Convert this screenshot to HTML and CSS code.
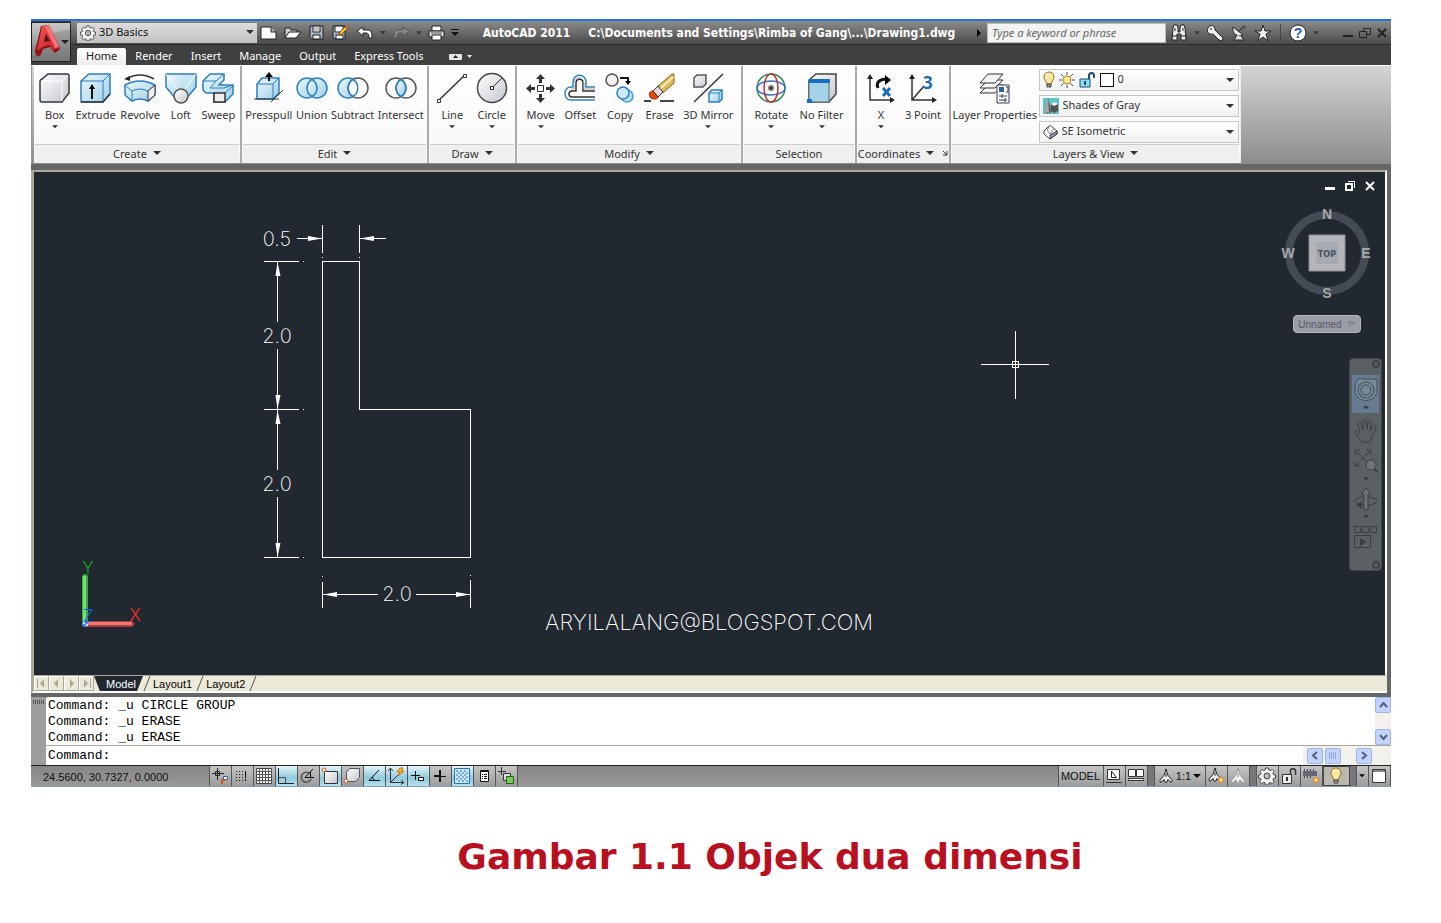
FILE: index.html
```html
<!DOCTYPE html>
<html lang="id">
<head>
    <meta charset="UTF-8">
    <meta name="viewport" content="width=device-width, initial-scale=1.0">
    <title>Gambar 1.1 Objek dua dimensi</title>
    <link rel="stylesheet" href="styles.css">
</head>
<body>
    <!-- shared icon parts -->
    <svg class="defs" width="0" height="0" aria-hidden="true">
        <defs>
            <linearGradient id="blue" x1="0" y1="0" x2="1" y2="1"><stop offset="0" stop-color="#eef8fd"/><stop offset="1" stop-color="#9dd0e8"/></linearGradient>
            <linearGradient id="grey" x1="0" y1="0" x2="1" y2="1"><stop offset="0" stop-color="#ffffff"/><stop offset="1" stop-color="#c3c7cf"/></linearGradient>
            <linearGradient id="red" x1="0" y1="0" x2="1" y2="1"><stop offset="0" stop-color="#f0595a"/><stop offset="1" stop-color="#c3141e"/></linearGradient>
            <symbol id="tri" viewBox="0 0 8 5"><path d="M0 0h8L4 4z"/></symbol>
            <symbol id="bulb" viewBox="0 0 12 18"><path d="M6 1c3 0 5 2 5 5 0 2-2 4-3 7H4C3 10 1 8 1 6c0-3 2-5 5-5z" fill="#ffe9a0" stroke="#8a6f28"/><path d="M4 13h4v3H4z" fill="#999" stroke="#444"/><path d="M3 5c0-2 1-2 2-2" stroke="#fff" fill="none"/></symbol>
            <symbol id="gear" viewBox="0 0 18 18"><path d="M7.500 1h3l.4 2 1.400.6 1.800-1.200 2 2-1.200 1.800.6 1.400 2 .4v3l-2 .4-.6 1.400 1.200 1.800-2 2-1.800-1.200-1.400.6-.4 2h-3l-.4-2-1.400-.6-1.800 1.200-2-2 1.200-1.800-.6-1.400-2-.4v-3l2-.4.6-1.400L1.900 4.400l2-2 1.800 1.200L7.100 3z" fill="#f4f4f4" stroke="#444"/><circle cx="9" cy="9" r="3" fill="#bbb" stroke="#444"/></symbol>
            <symbol id="scale" viewBox="0 0 18 18"><path d="M9 1l2 7 5 6-1 2-4-3-1 3H8l-1-3-4 3-1-2 5-6z" fill="#eee" stroke="currentColor"/><path d="M9 6v4" stroke="currentColor"/></symbol>
        </defs>
    </svg>

    <figure class="page">
        <div class="window">
            <header class="header">
                <button class="app-button" aria-label="Application menu">
                    <svg width="38" height="38" viewBox="0 0 38 38"><path d="M0 24Q18 8 38 7v31H0z" fill="#777" opacity=".4"/><path d="M3 29L9 3l8-1 11 24-5 4-5-6-7 2-3 7z" fill="#7d0f15"/><path d="M5 27L10 3l7-1 11 23-8 3-2-6-7 2-2 6z" fill="url(#red)"/><path d="M12 19l2-8 4 7z" fill="#5b1013"/><path d="M13 3l4-1 10 22-4 1z" fill="#f47274"/><path d="M3 29l8-5-2 7-4 3z" fill="#96141b"/><path d="M29 17h8l-4 4z" fill="#222"/></svg>
                </button>
                <div class="titlebar">
                    <div class="workspace">
                        <svg width="16" height="16"><use href="#gear"/></svg>
                        <select aria-label="Workspace"><option>3D Basics</option></select>
                        <svg class="tri" width="8" height="5"><use href="#tri"/></svg>
                    </div>
                    <div class="quick">
                        <button aria-label="New"><svg width="18" height="16" viewBox="0 0 18 16"><path d="M1 2h10l5 5v7H1z" fill="#fff" stroke="#222"/><path d="M11 2v5h5" fill="#bbb" stroke="#222"/></svg></button>
                        <button aria-label="Open"><svg width="18" height="16" viewBox="0 0 18 16"><path d="M1 13V3h5l1 2h6v3" fill="#ccc" stroke="#222"/><path d="M1 13l4-6h12l-5 6z" fill="#fff" stroke="#222"/></svg></button>
                        <button aria-label="Save"><svg width="16" height="16" viewBox="0 0 16 16"><path d="M1 1h13v13H3l-2-2z" fill="#aab4c2" stroke="#222"/><path d="M4 1h7v6H4z" fill="#fff" stroke="#222"/><path d="M4 10h7v4H4z" fill="#eee" stroke="#222"/><path d="M5 3h5M5 5h5" stroke="#888"/></svg></button>
                        <button aria-label="Save As"><svg width="18" height="16" viewBox="0 0 18 16"><path d="M1 1h12v13H3l-2-2z" fill="#aab4c2" stroke="#222"/><path d="M3 1h8v6H3zM4 10h7v4H4z" fill="#fff" stroke="#222"/><path d="M7 10l1-3 6-6 2 2-6 6z" fill="#ffc832" stroke="#7a4b10"/><path d="M13 2l2-1 1 2-1 1z" fill="#e3542c"/></svg></button>
                        <button aria-label="Undo"><svg width="18" height="14" viewBox="0 0 18 14"><path d="M1 5l6-4v3h5c3 0 4 2 4 8h-3c0-4-1-5-3-5H7v3z" fill="#fff" stroke="#222"/></svg></button>
                        <button class="drop" aria-label="Undo list"><svg width="6" height="4"><use href="#tri"/></svg></button>
                        <button aria-label="Redo"><svg width="18" height="14" viewBox="0 0 18 14"><path d="M17 5l-6-4v3H6c-3 0-4 2-4 8h3c0-4 1-5 3-5h3v3z" fill="#8b8b8b" stroke="#555"/></svg></button>
                        <button class="drop" aria-label="Redo list"><svg width="6" height="4"><use href="#tri"/></svg></button>
                        <button aria-label="Plot"><svg width="18" height="16" viewBox="0 0 18 16"><path d="M4 1h9v5H4z" fill="#fff" stroke="#222"/><path d="M1 6h15v6H1z" fill="#ddd" stroke="#222"/><path d="M4 10h9v5H4z" fill="#fff" stroke="#222"/><path d="M3 8h11" stroke="#555"/></svg></button>
                        <button class="drop" aria-label="Customize"><svg width="8" height="8" viewBox="0 0 8 8"><path d="M0 0h8v1H0zM0 3h8L4 7z" fill="#111"/></svg></button>
                    </div>
                    <div class="title"><span>AutoCAD 2011</span><span>C:\Documents and Settings\Rimba of Gang\...\Drawing1.dwg</span></div>
                    <div class="info">
                        <svg width="5" height="8" viewBox="0 0 5 8"><path d="M0 0l4 4-4 4z"/></svg>
                        <input type="text" placeholder="Type a keyword or phrase" aria-label="Search">
                        <button aria-label="Find"><svg width="18" height="18" viewBox="0 0 18 18"><path d="M3 4l1-3h3l1 3v4h2V4l1-3h3l1 3 1 12h-5v-6H7v6H2z" fill="#eee" stroke="#222"/><path d="M2 12h5M11 12h5M5 4v3M13 4v3" stroke="#222"/></svg></button>
                        <button class="drop" aria-label="Find options"><svg width="6" height="4"><use href="#tri"/></svg></button>
                        <button aria-label="Subscription"><svg width="18" height="18" viewBox="0 0 18 18"><path d="M9 6l8 8-1 3-3-1-6-6C3 11 0 8 2 4s7-3 7 2z" fill="#eee" stroke="#222"/><circle cx="5" cy="5" r="1" fill="#555"/></svg></button>
                        <button aria-label="Communication"><svg width="16" height="18" viewBox="0 0 16 18"><path d="M2 3c-1 7 4 10 10 8z" fill="#eee" stroke="#222"/><path d="M6 11l-3 5h10l-3-4M8 7l4-4" fill="#ddd" stroke="#222"/><circle cx="13" cy="3" r="1" fill="#fff" stroke="#222"/></svg></button>
                        <button aria-label="Favorites"><svg width="18" height="18" viewBox="0 0 18 18"><path d="M9 1l2 6h6l-5 3 2 7-5-4-5 4 2-7-5-3h6z" fill="#eee" stroke="#222"/></svg></button>
                        <span class="split"></span>
                        <button aria-label="Help"><svg width="18" height="18" viewBox="0 0 18 18"><circle cx="9" cy="9" r="8" fill="#fff" stroke="#222"/><text class="q" x="9" y="14">?</text></svg></button>
                        <button class="drop" aria-label="Help options"><svg width="6" height="4"><use href="#tri"/></svg></button>
                    </div>
                    <div class="win">
                        <button aria-label="Minimize"><svg width="12" height="12" viewBox="0 0 12 12"><path d="M1 8h10v2H1z" fill="#222"/></svg></button>
                        <button aria-label="Restore"><svg width="12" height="12" viewBox="0 0 12 12"><path d="M4.500 4V1.500h7v6H8M.5 4.500h7v6h-7z" fill="none" stroke="#222"/></svg></button>
                        <button aria-label="Close"><svg width="12" height="12" viewBox="0 0 12 12"><path d="M2 2l8 8M10 2l-8 8" stroke="#222" stroke-width="2"/></svg></button>
                    </div>
                </div>
                <nav class="tabs">
                    <a class="active" href="#home">Home</a>
                    <a href="#render">Render</a>
                    <a href="#insert">Insert</a>
                    <a href="#manage">Manage</a>
                    <a href="#output">Output</a>
                    <a href="#express">Express Tools</a>
                    <button aria-label="Minimize ribbon"><svg width="24" height="8" viewBox="0 0 24 8"><rect y="1" width="13" height="6" rx="1" fill="#e8e8e8"/><path d="M4 5h5L6.500 2z" fill="#222"/><path d="M18 2h5l-2.500 3z" fill="#eee"/></svg></button>
                </nav>
            </header>

            <div class="ribbon">
                <section class="panel create">
                    <div class="tools">
                        <button class="tool"><svg width="32" height="32" viewBox="0 0 32 32"><path d="M1 9q0-1 2-2l6-5h19q2 0 2 2v17l-7 9H3q-2 0-2-2z" fill="url(#grey)" stroke="#33373f" stroke-width="1.500"/><path d="M2 9h21v20M23 9l6-6" fill="none" stroke="#fff"/></svg>Box<svg class="tri" width="6" height="4"><use href="#tri"/></svg></button>
                        <button class="tool"><svg width="32" height="32" viewBox="0 0 32 32"><path d="M1 9l8-7h21v20l-7 8H1z" fill="url(#blue)" stroke="#2b7fc0" stroke-width="1.500"/><path d="M1 9h22v21M23 9l7-7" fill="none" stroke="#2b7fc0"/><path d="M12 27V15" stroke="#111" stroke-width="2"/><path d="M9 17l3-5 3 5z"/><path d="M1 30h22l7-8" fill="none" stroke="#333" stroke-width="1.500"/></svg>Extrude</button>
                        <button class="tool"><svg width="32" height="32" viewBox="0 0 32 32"><path d="M2 7Q16-1 30 7" fill="none" stroke="#333" stroke-width="1.500"/><path d="M0 7l6-3v5z" fill="#222"/><path d="M1 13Q16 5 31 13v10l-7 6q-8-4-16 0l-7-6z" fill="url(#blue)" stroke="#2b7fc0" stroke-width="1.500"/><path d="M1 13l7 6q8-4 16 0l7-6M8 19v10" fill="none" stroke="#2b7fc0"/><path d="M24 19l7-6v10l-7 6z" fill="#eee" stroke="#333"/></svg>Revolve</button>
                        <button class="tool"><svg width="32" height="32" viewBox="0 0 32 32"><path d="M1 2h30v13L21 27H11L1 15z" fill="url(#blue)" stroke="#2b7fc0" stroke-width="1.500"/><path d="M1 2l12 16M31 2L19 18" stroke="#fff"/><circle cx="16" cy="24" r="7" fill="url(#grey)" stroke="#555" stroke-width="1.500"/></svg>Loft</button>
                        <button class="tool"><svg width="32" height="32" viewBox="0 0 32 32"><path d="M1 9l7-7h14v6l-5 5h14v9l-8 8H12v-9H4l-3-3z" fill="url(#blue)" stroke="#2b7fc0" stroke-width="1.500"/><path d="M1 9h13l8-7M14 9l-6 7h14l9-3M23 21l8-7" fill="none" stroke="#2b7fc0"/><path d="M12 21h11v9H12z" fill="#eee" stroke="#333" stroke-width="1.500"/></svg>Sweep</button>
                    </div>
                    <button class="panel-name">Create<svg class="tri" width="8" height="5"><use href="#tri"/></svg></button>
                </section>
                <section class="panel edit">
                    <div class="tools">
                        <button class="tool"><svg width="32" height="32" viewBox="0 0 32 32"><path d="M4 12l5-6h17v15l-6 6H4z" fill="url(#blue)" stroke="#2b7fc0" stroke-width="1.500"/><path d="M4 12h16v15M20 12l6-6" fill="none" stroke="#2b7fc0"/><path d="M1 27h25M18 30l12-12" stroke="#333"/><path d="M16 9V3" stroke="#111" stroke-width="2"/><path d="M12 5l4-5 4 5z"/></svg>Presspull</button>
                        <button class="tool"><svg width="32" height="32" viewBox="0 0 32 32"><circle cx="11" cy="16" r="10" fill="url(#blue)"/><circle cx="21" cy="16" r="10" fill="url(#blue)"/><g fill="none" stroke="#2b7fc0" stroke-width="1.500"><circle cx="11" cy="16" r="10"/><circle cx="21" cy="16" r="10"/></g></svg>Union</button>
                        <button class="tool"><svg width="32" height="32" viewBox="0 0 32 32"><circle cx="11" cy="16" r="10" fill="url(#blue)" stroke="#2b7fc0" stroke-width="1.500"/><circle cx="21" cy="16" r="10" fill="#fff" stroke="#555" stroke-width="1.500"/><path d="M16 7.500a10 10 0 0 0 0 17a10 10 0 0 0 0-17z" fill="#fff" stroke="#2b7fc0" stroke-width="1.500"/></svg>Subtract</button>
                        <button class="tool"><svg width="32" height="32" viewBox="0 0 32 32"><g fill="none" stroke="#555" stroke-width="1.500"><circle cx="11" cy="16" r="10"/><circle cx="21" cy="16" r="10"/></g><path d="M16 7.500a10 10 0 0 0 0 17a10 10 0 0 0 0-17z" fill="url(#blue)" stroke="#2b7fc0" stroke-width="1.500"/></svg>Intersect</button>
                    </div>
                    <button class="panel-name">Edit<svg class="tri" width="8" height="5"><use href="#tri"/></svg></button>
                </section>
                <section class="panel draw">
                    <div class="tools">
                        <button class="tool"><svg width="32" height="32" viewBox="0 0 32 32"><path d="M3 28L29 3" stroke="#333" stroke-width="1.500"/><path d="M1.500 27.500h3v3h-3zM27.500 2.500h3v3h-3z" fill="#fff" stroke="#333"/></svg>Line<svg class="tri" width="6" height="4"><use href="#tri"/></svg></button>
                        <button class="tool"><svg width="32" height="32" viewBox="0 0 32 32"><circle cx="16" cy="16" r="14.500" fill="url(#grey)" stroke="#444" stroke-width="1.500"/><path d="M16 16L26 6" stroke="#333"/><path d="M14.500 14.500h3v3h-3z" fill="#fff" stroke="#222"/></svg>Circle<svg class="tri" width="6" height="4"><use href="#tri"/></svg></button>
                    </div>
                    <button class="panel-name">Draw<svg class="tri" width="8" height="5"><use href="#tri"/></svg></button>
                </section>
                <section class="panel modify">
                    <div class="tools">
                        <button class="tool"><svg width="32" height="32" viewBox="0 0 32 32"><path d="M12.500 13.500h6v6h-6z" fill="#fff" stroke="#333"/><path d="M15.500 11V5M15.500 22v6M10 16.500H4M21 16.500h6" stroke="#333" stroke-width="3"/><path d="M11 7l4.500-5L20 7zM11 26l4.500 5 4.500-5zM6 12l-5 4.500L6 21zM25 12l5 4.500-5 4.500z" fill="#333"/></svg>Move<svg class="tri" width="6" height="4"><use href="#tri"/></svg></button>
                        <button class="tool"><svg width="32" height="32" viewBox="0 0 32 32"><g fill="none"><path d="M31 15H22V10c0-9-13-9-13 0v5H7c-8 0-8 13 0 13h24" stroke="#2b7fc0" stroke-width="1.500"/><path d="M31 19h-12v-8c0-5-7-5-7 0v8H8c-4 0-4 6 0 6h23" stroke="#333" stroke-width="1.500"/><path d="M31 17H20V11c0-7-10-7-10 0v6H7" stroke="#aaa"/></g></svg>Offset</button>
                        <button class="tool"><svg width="32" height="32" viewBox="0 0 32 32"><circle cx="8" cy="8" r="6" fill="#f2f2f2" stroke="#555" stroke-width="1.500"/><path d="M16 6h8v4" fill="none" stroke="#111" stroke-width="2"/><path d="M21 9h6l-3 4z"/><circle cx="23" cy="24" r="6" fill="url(#blue)" stroke="#4a9ad0" stroke-width="1.500"/><circle cx="19" cy="21" r="6" fill="#cfeafa" stroke="#2b7fc0" stroke-width="1.500"/></svg>Copy</button>
                        <button class="tool"><svg width="32" height="32" viewBox="0 0 32 32"><path d="M0 29h7M16 29h14" stroke="#444" stroke-width="2"/><path d="M14 14L28 2h2v9L19 21z" fill="#dcb85c" stroke="#8a6520"/><path d="M16 17L29 5" stroke="#fff0b8" stroke-width="2"/><path d="M9 19l5-5 5 6-5 5z" fill="#ddd" stroke="#333"/><path d="M9 19c-4 0-5 4-2 7 3 2 7 1 7-1z" fill="#e3490f" stroke="#8b2500"/></svg>Erase</button>
                        <button class="tool"><svg width="32" height="32" viewBox="0 0 32 32"><path d="M2 30L31 2" stroke="#333" stroke-width="1.500"/><path d="M2 6l3-3h9v9l-3 3H2z" fill="url(#grey)" stroke="#555" stroke-width="1.500"/><path d="M17 21l3-3h10v9l-3 3H17z" fill="url(#blue)" stroke="#2b7fc0" stroke-width="1.500"/><path d="M17 21h10v9M27 21l3-3" fill="none" stroke="#2b7fc0"/></svg>3D Mirror<svg class="tri" width="6" height="4"><use href="#tri"/></svg></button>
                    </div>
                    <button class="panel-name">Modify<svg class="tri" width="8" height="5"><use href="#tri"/></svg></button>
                </section>
                <section class="panel selection">
                    <div class="tools">
                        <button class="tool"><svg width="32" height="32" viewBox="0 0 32 32"><g fill="none" stroke-width="1.500"><circle cx="16" cy="16" r="14" stroke="#3b8a4a"/><ellipse cx="16" cy="16" rx="14" ry="7" stroke="#3570c0"/><ellipse cx="16" cy="16" rx="7" ry="14" stroke="#b8343a"/></g><circle cx="16" cy="16" r="3" fill="#777"/><circle cx="16" cy="16" r="1"/></svg>Rotate<svg class="tri" width="6" height="4"><use href="#tri"/></svg></button>
                        <button class="tool"><svg width="32" height="32" viewBox="0 0 32 32"><path d="M3 8l7-6h20v20l-7 8H3z" fill="url(#grey)" stroke="#444" stroke-width="1.500"/><path d="M3 8h20v22H3z" fill="#a5d4ea" stroke="#666"/><path d="M3 7h21v4H3zM1 27h5v4H1z" fill="#1370c4"/></svg>No Filter<svg class="tri" width="6" height="4"><use href="#tri"/></svg></button>
                    </div>
                    <button class="panel-name">Selection</button>
                </section>
                <section class="panel coords">
                    <div class="tools">
                        <button class="tool"><svg width="32" height="32" viewBox="0 0 32 32"><path d="M5 5v23h22" fill="none" stroke="#333" stroke-width="1.500"/><path d="M2 7l3-5 3 5zM25 25l5 3-5 3z" fill="#222"/><path d="M13 16c-3-7 5-10 9-8" fill="none" stroke="#111" stroke-width="3"/><path d="M20 3l6 5-6 5z"/><path d="M18 16l7 8M25 16l-7 8" stroke="#1b6db5" stroke-width="3"/></svg>X<svg class="tri" width="6" height="4"><use href="#tri"/></svg></button>
                        <button class="tool"><svg width="32" height="32" viewBox="0 0 32 32"><path d="M5 5v23h22M5 28l12-14" fill="none" stroke="#333" stroke-width="1.500"/><path d="M2 7l3-5 3 5zM25 25l5 3-5 3z" fill="#222"/><text class="three" x="16" y="17">3</text></svg>3 Point</button>
                    </div>
                    <button class="panel-name">Coordinates<svg class="tri" width="8" height="5"><use href="#tri"/></svg><svg class="corner" width="6" height="6" viewBox="0 0 6 6"><path d="M1 1l4 4M5 1v4H1" fill="none" stroke="#333"/></svg></button>
                </section>
                <section class="panel layers">
                    <div class="tools">
                        <button class="tool"><svg width="32" height="32" viewBox="0 0 32 32"><g fill="#f6f6f6" stroke="#333"><path d="M1 21l8-8h15l-8 8z"/><path d="M1 16l8-8h15l-8 8z"/><path d="M1 11l8-9h15l-8 9z"/></g><path d="M18 13h12v18H18z" fill="#fff" stroke="#333b55"/><path d="M20 15h5v5h-5z" fill="#2a61ac"/><path d="M27 15h2v5h-2M20 24h8M20 28h8M23 22v4M26 26v4" fill="none" stroke="#333b55"/></svg>Layer Properties</button>
                        <div class="combos">
                            <div class="combo">
                                <svg width="12" height="18"><use href="#bulb"/></svg>
                                <svg width="16" height="16" viewBox="0 0 16 16"><path d="M8 0v16M0 8h16M2 2l12 12M14 2L2 14" stroke="#444"/><circle cx="8" cy="8" r="5" fill="#fff"/><circle cx="8" cy="8" r="4" fill="#ffe58c" stroke="#a8882c"/></svg>
                                <svg width="17" height="16" viewBox="0 0 17 16"><path d="M10 8V4c0-4 5-4 5 0v2" fill="none" stroke="#1c4f74" stroke-width="2"/><path d="M1 7h10v8H1z" fill="#8edcf0" stroke="#1c4f74"/><path d="M6 9v4" stroke="#1c4f74" stroke-width="2"/></svg>
                                <span class="swatch"></span>
                                <select aria-label="Layer"><option>0</option></select>
                                <svg class="tri" width="8" height="5"><use href="#tri"/></svg>
                            </div>
                            <div class="combo">
                                <svg width="16" height="16" viewBox="0 0 16 16"><path d="M0 0h16v16H0z" fill="#5cc5c8"/><path d="M5 0l4 14-4 2-4-2z" fill="#666"/><path d="M5 0l1 15-5-1z" fill="#aaa"/><path d="M8 6l4-2 3 2v7l-4 2-3-2z" fill="#555"/><path d="M8 6l4-2 3 2-4 2z" fill="#fff"/></svg>
                                <select aria-label="Visual style"><option>Shades of Gray</option></select>
                                <svg class="tri" width="8" height="5"><use href="#tri"/></svg>
                            </div>
                            <div class="combo">
                                <svg width="15" height="16" viewBox="0 0 15 16"><path d="M1 7l6-6 7 6v3l-7 5-6-5z" fill="#fff" stroke="#444"/><path d="M14 7v3l-7 5v-4z" fill="#8a94a2" stroke="#444"/><path d="M4 6l3-5 4 4-4 5z" fill="#eee" stroke="#888"/></svg>
                                <select aria-label="View"><option>SE Isometric</option></select>
                                <svg class="tri" width="8" height="5"><use href="#tri"/></svg>
                            </div>
                        </div>
                    </div>
                    <button class="panel-name">Layers &amp; View<svg class="tri" width="8" height="5"><use href="#tri"/></svg></button>
                </section>
            </div>

            <main class="document">
                <div class="canvas">
                    <svg class="drawing" width="100%" height="100%">
                        <g class="lines">
                            <!-- object -->
                            <path d="M288.500 89.500h37v148h111v148h-148z"/>
                            <!-- vertical dimensions -->
                            <path d="M230 89.500h35M269 89.500h1M230 237.500h35M269 237.500h1M230 385.500h35M269 385.500h1"/>
                            <path d="M243.500 90v60M243.500 177v121M243.500 325v60"/>
                            <!-- top dimension -->
                            <path d="M288.500 53v28M288.500 85v1M325.500 53v28M325.500 85v1M263 66.500h25M326 66.500h26"/>
                            <!-- bottom dimension -->
                            <path d="M288.500 404v1M288.500 410v26M436.500 403v1M436.500 408v28M289 422.500h55M382 422.500h54"/>
                            <!-- crosshair -->
                            <path d="M947 192.500h68M981.500 159v68M978.500 189.500h6v6h-6z"/>
                        </g>
                        <g fill="#fff">
                            <path d="M243.500 90l3 14h-5zM243.500 237l3-14h-5zM243.500 238l3 14h-5zM243.500 385l3-14h-5z"/>
                            <path d="M288 66.500l-14-2.500v5zM326 66.500l14-2.500v5zM289 422.500l14-2.500v5zM436 422.500l-14-2.500v5z"/>
                        </g>
                        <g class="dims">
                            <text x="243" y="74">0.5</text>
                            <text x="243" y="171">2.0</text>
                            <text x="243" y="319">2.0</text>
                            <text x="363" y="429">2.0</text>
                        </g>
                        <text class="note" x="675" y="458">ARYILALANG@BLOGSPOT.COM</text>
                        <!-- ucs icon -->
                        <path d="M48 404l2-2h2l2 2v46h-6z" fill="#3ea53e"/>
                        <path d="M49 404h3v46h-3z" fill="#72e272"/>
                        <path d="M52 449h46l3 3-3 3H52z" fill="#a33c3e"/>
                        <path d="M52 450h46v3H52z" fill="#f67676"/>
                        <circle cx="51" cy="452" r="3" fill="#4c8be8"/>
                        <path d="M49 450h2v2h-2zM52 452h2v2h-2z" fill="#c4e2ff"/>
                        <g class="axes">
                            <text x="54" y="402" fill="#17a51b">Y</text>
                            <text x="101" y="449" fill="#ff2a2a">X</text>
                            <text x="54" y="450" fill="#1b62f0">Z</text>
                        </g>
                    </svg>

                    <div class="doc-win">
                        <button aria-label="Minimize drawing"><svg width="12" height="12" viewBox="0 0 12 12"><path d="M1 7h10v3H1z" fill="#fff"/></svg></button>
                        <button aria-label="Restore drawing"><svg width="12" height="12" viewBox="0 0 12 12"><path d="M4 1.500h6.500V8" fill="none" stroke="#fff"/><path d="M2 4h6v6H2z" fill="none" stroke="#fff" stroke-width="2"/></svg></button>
                        <button aria-label="Close drawing"><svg width="12" height="12" viewBox="0 0 12 12"><path d="M2 2l8 8M10 2l-8 8" stroke="#fff" stroke-width="2"/></svg></button>
                    </div>

                    <div class="viewcube">
                        <svg width="100" height="100" viewBox="0 0 100 100">
                            <circle cx="50" cy="50" r="38" fill="none" stroke="#444b54" stroke-width="8"/>
                            <path d="M32 32h36v36H32z" fill="#b3b5b8" stroke="#8b8f94"/>
                            <path d="M39 39h22v22H39z" fill="#a5a9b1"/>
                            <text class="top" x="50" y="54">TOP</text>
                            <g class="compass">
                                <text x="50" y="16">N</text>
                                <text x="50" y="95">S</text>
                                <text x="11" y="55">W</text>
                                <text x="89" y="55">E</text>
                            </g>
                        </svg>
                        <button class="ucs-name">Unnamed<svg width="9" height="6" viewBox="0 0 9 6"><path d="M1 1h7L4.500 4.500z" fill="none" stroke="#70757c"/></svg></button>
                    </div>

                    <div class="navbar">
                        <button aria-label="Close bar" class="dot"><svg width="8" height="8" viewBox="0 0 8 8"><circle cx="4" cy="4" r="4" fill="#3d4247"/><path d="M2 2l4 4M6 2L2 6" stroke="#6b7075"/></svg></button>
                        <button aria-label="Steering wheel" class="wheel"><svg width="24" height="24" viewBox="0 0 24 24"><g fill="#778899" stroke="#3f4d5a"><path d="M12 1h11v11c0 14-22 14-22 0S6 1 12 1z"/><circle cx="12" cy="12" r="8"/><path d="M6 18l3-3M18 18l-3-3"/><circle cx="12" cy="12" r="5"/></g></svg><svg width="6" height="4"><use href="#tri"/></svg></button>
                        <button aria-label="Pan"><svg width="24" height="24" viewBox="0 0 24 24"><path d="M8 23L1 14c0-3 2-2 5 1L4 5c1-2 3-2 3 0l2 6V2c1-2 3-2 3 0l1 8 1-7c1-2 3-1 3 1l-1 8 3-5c2-2 3 0 3 2l-4 9-2 5z" fill="none" stroke="#3a3f45"/></svg></button>
                        <button aria-label="Zoom"><svg width="24" height="24" viewBox="0 0 24 24"><path d="M2 2l14 14M16 2L2 16M1 6V1h5M12 1h5v5M1 12v5h5" fill="none" stroke="#3a3f45"/><circle cx="17" cy="16" r="5" fill="#6f7478" stroke="#3a3f45"/><path d="M20 20l4 3" stroke="#3a3f45" stroke-width="2"/></svg><svg width="6" height="4"><use href="#tri"/></svg></button>
                        <button aria-label="Orbit"><svg width="24" height="24" viewBox="0 0 24 24"><ellipse cx="12" cy="14" rx="11" ry="4" fill="none" stroke="#3a3f45"/><path d="M10 23V7H7l5-6 5 6h-3v16z" fill="#6f7478" stroke="#3a3f45"/><path d="M8 14v8l-6-4z" fill="#3a3f45"/></svg><svg width="6" height="4"><use href="#tri"/></svg></button>
                        <button aria-label="ShowMotion"><svg width="24" height="24" viewBox="0 0 24 24"><path d="M.5 1.500h6v6h-6zM8.500 1.500h6v6h-6zM16.500 1.500h6v6h-6zM.5 10.500h16v12H.5z" fill="none" stroke="#3a3f45"/><path d="M6 13l7 4-7 4z" fill="#3a3f45"/></svg></button>
                        <button aria-label="Bar options" class="dot end"><svg width="8" height="8" viewBox="0 0 8 8"><circle cx="4" cy="4" r="4" fill="#3d4247"/><path d="M2 3h4M2 5h4" stroke="#6b7075"/></svg></button>
                    </div>
                </div>

                <div class="sheets">
                    <div class="sheet-nav">
                        <button aria-label="First"><svg width="9" height="9" viewBox="0 0 9 9"><path d="M0 0h1v9H0zM7 0v9L3 4.500z"/></svg></button>
                        <button aria-label="Previous"><svg width="9" height="9" viewBox="0 0 9 9"><path d="M6 0v9L2 4.500z"/></svg></button>
                        <button aria-label="Next"><svg width="9" height="9" viewBox="0 0 9 9"><path d="M3 0v9l4-4.500z"/></svg></button>
                        <button aria-label="Last"><svg width="9" height="9" viewBox="0 0 9 9"><path d="M2 0v9l4-4.500zM8 0h1v9H8z"/></svg></button>
                    </div>
                    <a class="active" href="#model">Model</a>
                    <svg width="8" height="15" viewBox="0 0 8 15"><path d="M1 15L7 0" stroke="#555"/></svg>
                    <a href="#layout1">Layout1</a>
                    <svg width="8" height="15" viewBox="0 0 8 15"><path d="M1 15L7 0" stroke="#555"/></svg>
                    <a href="#layout2">Layout2</a>
                    <svg width="8" height="15" viewBox="0 0 8 15"><path d="M1 15L7 0" stroke="#555"/></svg>
                </div>
            </main>

            <div class="command">
                <div class="grip"></div>
                <div class="console">
                    <div class="history">
                        <pre>Command: _u CIRCLE GROUP
Command: _u ERASE
Command: _u ERASE</pre>
                        <div class="vscroll">
                            <button class="sb" aria-label="Scroll up"><svg width="9" height="6" viewBox="0 0 9 6"><path d="M1 5l3.500-4L8 5" fill="none" stroke="#4d6185" stroke-width="2"/></svg></button>
                            <button class="sb" aria-label="Scroll down"><svg width="9" height="6" viewBox="0 0 9 6"><path d="M1 1l3.500 4L8 1" fill="none" stroke="#4d6185" stroke-width="2"/></svg></button>
                        </div>
                    </div>
                    <div class="prompt">
                        <label for="cmd">Command:</label>
                        <input type="text" id="cmd">
                        <div class="hscroll">
                            <button class="sb" aria-label="Scroll left"><svg width="6" height="9" viewBox="0 0 6 9"><path d="M5 1L1 4.500 5 8" fill="none" stroke="#4d6185" stroke-width="2"/></svg></button>
                            <button class="sb thumb" aria-label="Scroll position"><svg width="8" height="7" viewBox="0 0 8 7"><path d="M.5 0v7M2.500 0v7M4.500 0v7M6.500 0v7" stroke="#90aee8"/></svg></button>
                            <button class="sb last" aria-label="Scroll right"><svg width="6" height="9" viewBox="0 0 6 9"><path d="M1 1l4 3.500L1 8" fill="none" stroke="#4d6185" stroke-width="2"/></svg></button>
                        </div>
                    </div>
                </div>
            </div>

            <footer class="status">
                <div class="position">24.5600, 30.7327, 0.0000</div>
                <div class="group">
                    <button aria-label="Infer"><svg width="18" height="18" viewBox="0 0 18 18"><path d="M6.500 1v12M1 6.500h12" stroke="#222"/><path d="M4.500 4.500h4v4h-4z" fill="none" stroke="#222"/><path d="M12.500 9.500h4v3h-4z" fill="#fff" stroke="#1b62c0"/><path d="M11 12v5M11 13h3" stroke="#e0501c" stroke-width="2"/></svg></button>
                    <button aria-label="Snap"><svg width="18" height="18" viewBox="0 0 18 18"><path d="M3 4.500h8M3 7.500h8M3 10.500h8M3 13.500h10" stroke="#222" stroke-dasharray="1 2"/><path d="M12.500 4v7M12.500 12v2" stroke="#111"/></svg></button>
                    <button aria-label="Grid"><svg width="18" height="18" viewBox="0 0 18 18"><path d="M1.500 1.500h15v15h-15z" fill="#fff" stroke="#444"/><path d="M4.500 1v16M7.500 1v16M10.500 1v16M13.500 1v16M1 4.500h16M1 7.500h16M1 10.500h16M1 13.500h16" stroke="#555"/></svg></button>
                    <button class="on" aria-label="Ortho"><svg width="18" height="18" viewBox="0 0 18 18"><path d="M1.500 1v15.500H17" fill="none" stroke="#222"/><path d="M2 10.500h6.500V16" fill="none" stroke="#555"/></svg></button>
                    <button aria-label="Polar"><svg width="18" height="18" viewBox="0 0 18 18"><path d="M10 6a5 5 0 1 0 2 6" fill="none" stroke="#555" stroke-width="1.500"/><path d="M14 2L6 10.500h9M11.500 5v5" fill="none" stroke="#111"/></svg></button>
                    <button class="on" aria-label="Object snap"><svg width="18" height="18" viewBox="0 0 18 18"><path d="M3.500 4.500h13v12h-13z" fill="url(#grey)" stroke="#333"/><circle cx="3" cy="3" r="2" fill="#fff" stroke="#e0501c"/></svg></button>
                    <button aria-label="3D object snap"><svg width="18" height="18" viewBox="0 0 18 18"><path d="M3.500 5.500l3-4h10v9l-4 4h-9z" fill="url(#grey)" stroke="#555"/><circle cx="3" cy="14" r="2" fill="#fff" stroke="#e0501c"/></svg></button>
                    <button class="on" aria-label="Tracking"><svg width="18" height="18" viewBox="0 0 18 18"><path d="M14 3L4 13.500h11M7 10l2 3" fill="none" stroke="#111"/></svg></button>
                    <button class="on" aria-label="Dynamic UCS"><svg width="18" height="18" viewBox="0 0 18 18"><path d="M3.500 2v13.500H17M4 15L11 8" fill="none" stroke="#333"/><path d="M1 4l2.500-3L6 4M14 13l3 2.500-3 2" fill="none" stroke="#333"/><path d="M13 1l-3 4h3l-2 4 6-5h-3l2-3z" fill="#ffc21d" stroke="#cc6b12"/></svg></button>
                    <button class="on" aria-label="Dynamic input"><svg width="18" height="18" viewBox="0 0 18 18"><path d="M6.500 4v9M2 8.500h9" stroke="#111"/><path d="M9.500 10.500h5v3h-5z" fill="#fff" stroke="#111"/></svg></button>
                    <button aria-label="Lineweight"><svg width="18" height="18" viewBox="0 0 18 18"><path d="M9 3v12M3 9h6" stroke="#111" stroke-width="2"/><path d="M9 9.500h6" stroke="#111"/></svg></button>
                    <button class="on" aria-label="Transparency"><svg width="18" height="18" viewBox="0 0 18 18"><path d="M1.500 1.500h15v15h-15z" fill="#cfe8f8" stroke="#2672bd"/><path d="M3 4h12M3 8h12M3 12h12" stroke="#7ab0d8" stroke-width="2" stroke-dasharray="2 2"/><path d="M5 6h11M5 10h11M5 14h10" stroke="#7ab0d8" stroke-width="2" stroke-dasharray="2 2"/></svg></button>
                    <button aria-label="Quick properties"><svg width="18" height="18" viewBox="0 0 18 18"><path d="M5.500 3.500h8v11h-8z" fill="#fff" stroke="#111"/><path d="M5 4.500h9M7 7.500h1M9 7.500h3M7 9.500h1M9 9.500h3M7 11.500h1M9 11.500h3" stroke="#111"/></svg></button>
                    <button aria-label="Selection cycling"><svg width="18" height="18" viewBox="0 0 18 18"><path d="M4.500 0v8M1 4.500h8" stroke="#333"/><path d="M6.500 6.500h7v7h-7z" fill="#ddd" stroke="#333"/><path d="M9.500 9.500h7v7h-7z" fill="#7cc95c" stroke="#24621b"/></svg></button>
                </div>
                <div class="group right">
                    <button class="model">MODEL</button>
                    <button aria-label="Layout view"><svg width="18" height="18" viewBox="0 0 18 18"><path d="M2.500 2.500h12v10h-12z" fill="#fff" stroke="#333"/><path d="M6.500 4v6.500h5z" fill="none" stroke="#222"/><path d="M1 15.500h16" stroke="#333"/></svg></button>
                    <button aria-label="Drawings view"><svg width="18" height="18" viewBox="0 0 18 18"><path d="M1.500 2.500h7v7h-7zM9.500 2.500h7v7h-7zM1.500 11.500h15v2h-15z" fill="#fff" stroke="#333"/></svg></button>
                    <span class="space"></span>
                    <button class="ratio"><svg width="16" height="16"><use href="#scale"/></svg>1:1<svg width="8" height="5"><use href="#tri"/></svg></button>
                    <button aria-label="Annotation visibility"><svg width="18" height="18" viewBox="0 0 18 18"><use href="#scale" width="16" height="16"/><circle cx="14" cy="13" r="2.500" fill="#ffe277" stroke="#e57a17"/></svg></button>
                    <button class="off" aria-label="Auto scale"><svg width="18" height="18"><use href="#scale"/></svg></button>
                    <span class="space"></span>
                    <button aria-label="Workspace switching"><svg width="18" height="18"><use href="#gear"/></svg></button>
                    <button aria-label="Lock toolbars"><svg width="18" height="18" viewBox="0 0 18 18"><path d="M10.500 7V4c0-3 5-3 5 0v4" fill="none" stroke="#333" stroke-width="1.500"/><path d="M2.500 7.500h9v9h-9z" fill="#eee" stroke="#333"/><path d="M7 10v4" stroke="#333" stroke-width="2"/></svg></button>
                    <button aria-label="Hardware acceleration"><svg width="18" height="18" viewBox="0 0 18 18"><path d="M1 4h14v5H1z" fill="#667"/><path d="M2.500 2v2M5.500 2v2M8.500 2v2M11.500 2v2M2.500 9v2M5.500 9v2M8.500 9v2" stroke="#445"/><circle cx="14" cy="13" r="2.500" fill="#ffe277" stroke="#e57a17"/></svg></button>
                    <button class="pressed" aria-label="Isolate objects"><svg width="12" height="18"><use href="#bulb"/></svg></button>
                    <span class="space"></span>
                    <button class="narrow" aria-label="Status menu"><svg width="6" height="4"><use href="#tri"/></svg></button>
                    <button aria-label="Clean screen"><svg width="18" height="18" viewBox="0 0 18 18"><path d="M2.500 2.500h13v13h-13z" fill="#fff" stroke="#333"/><path d="M3 4h12" stroke="#888" stroke-width="2"/></svg></button>
                </div>
            </footer>
        </div>
        <figcaption>Gambar 1.1 Objek dua dimensi</figcaption>
    </figure>
</body>
</html>
```

FILE: styles.css
```css
* { box-sizing: border-box; }
body { margin: 0; background: #fff; color: #333; font-family: "Noto Sans", sans-serif; font-size: 11px; }
button { margin: 0; padding: 0; border: none; background: none; color: inherit; font: inherit; display: flex; align-items: center; justify-content: center; }
select, input { appearance: none; margin: 0; padding: 0; border: none; outline: none; background: none; color: inherit; font: inherit; min-width: 0; }
svg { display: block; flex: none; overflow: visible; }
a { color: inherit; text-decoration: none; }
.defs { position: absolute; }
.tri { fill: #333; }

.page { margin: 0; padding: 19px 50px 0 31px; }
.window { border-top: 2px solid #1f74de; }

/* title bar and menu tabs */
.header { display: grid; grid-template-columns: 40px 1fr; grid-template-rows: 24px 20px; background: #404040; }
.app-button { grid-row: 1 / 3; align-self: start; height: 40px; border: 1px solid #222; background: linear-gradient(#c8c8c8, #777); margin-top: 1px; }
.titlebar { display: flex; align-items: center; padding-left: 6px; background: linear-gradient(#8b8b8b, #4a4a4a); border-bottom: 1px solid #2b2b2b; }
.workspace { display: flex; align-items: center; gap: 3px; width: 180px; height: 20px; padding: 0 3px; background: linear-gradient(#dcdcdc, #c2c2c2); color: #111; }
.workspace select { flex: 1; padding-bottom: 2px; }
.quick, .info, .win { display: flex; align-items: center; }
.quick button, .info button { width: 24px; height: 22px; }
.quick .drop, .info .drop { width: 12px; fill: #333; }
.title { flex: 1; display: flex; justify-content: center; gap: 18px; white-space: nowrap; overflow: hidden; color: #fff; font-family: "DejaVu Sans Condensed", "DejaVu Sans", sans-serif; font-weight: bold; font-size: 12px; }
.info input { width: 179px; height: 20px; margin: 0 1px 0 5px; padding: 0 4px; background: #f3f3f3; border: 1px solid #bbb; font-style: italic; }
.info input::placeholder { color: #666; }
.split { width: 1px; height: 18px; margin: 0 5px; background: #444; }
.win { gap: 5px; padding: 0 3px 0 20px; }
.q { font: bold 14px "Liberation Sans", sans-serif; fill: #2159b8; text-anchor: middle; }
.tabs { display: flex; align-items: flex-end; padding-left: 6px; color: #fff; }
.tabs a { height: 17px; line-height: 15px; padding: 0 9px; }
.tabs .active { background: linear-gradient(#fff, #ececec); color: #222; border-radius: 2px 2px 0 0; }
.tabs button { height: 17px; margin-left: 16px; }

/* ribbon */
.ribbon { display: flex; height: 99px; padding: 0 1px 1px 2px; background: linear-gradient(#d4d4d4, #8c8c8c); border-top: 1px solid #fff; border-left: 1px solid #999; }
.panel { display: flex; flex-direction: column; background: linear-gradient(#fff, #f8f8f8); border-right: 2px solid #aaa; flex: none; }
.create { width: 208px; }
.edit { width: 187px; }
.draw { width: 88px; }
.modify { width: 226px; }
.selection { width: 114px; }
.coords { width: 94px; }
.layers { width: 290px; border-right: 1px solid #eee; }
.tools { flex: 1; display: flex; justify-content: space-evenly; align-items: flex-start; }
.tool { flex-direction: column; min-width: 32px; padding-top: 6px; line-height: 21px; white-space: nowrap; }
.panel-name { height: 19px; gap: 6px; padding-bottom: 2px; background: #efefef; border-top: 1px solid #ccc; margin: 0 1px; }
.corner { margin-left: 2px; }
.three { font: bold 17px "Noto Sans", sans-serif; fill: #1b6db5; }
.combos { display: flex; flex-direction: column; gap: 4px; width: 200px; padding-top: 3px; }
.combo { display: flex; align-items: center; gap: 4px; height: 22px; padding: 0 4px 0 3px; background: linear-gradient(#fff, #f1f1f1); border: 1px solid #c6c6c6; }
.combo select { flex: 1; padding-bottom: 4px; }
.swatch { width: 14px; height: 14px; background: #fff; border: 1px solid #111; }

/* drawing area */
.document { background: #666; padding: 6px 4px 4px 0; }
.canvas { position: relative; height: 506px; background: #212830; border: solid #aca899; border-width: 2px 0 1px 3px; border-right: 2px solid #fff; overflow: hidden; }
.drawing { position: absolute; left: 0; top: 0; }
.lines { fill: none; stroke: #fff; shape-rendering: crispEdges; }
.dims, .note { font: 200 20px "Inter", sans-serif; fill: #fff; text-anchor: middle; }
.note { font-size: 22px; }
.axes { font: 300 17px "Inter", sans-serif; text-anchor: middle; }
.doc-win { position: absolute; right: 9px; top: 8px; display: flex; gap: 8px; }
.viewcube { position: absolute; right: 8px; top: 31px; width: 100px; }
.compass { font: bold 14px "Liberation Sans", sans-serif; fill: #a4a7ab; text-anchor: middle; }
.top { font: bold 9px "DejaVu Sans Condensed", sans-serif; fill: #4b4f57; text-anchor: middle; }
.ucs-name { width: 68px; height: 18px; margin: 12px auto 0; gap: 5px; background: #9a9ca8; border: 1px solid #b5b7c0; border-radius: 4px; color: #555a63; font: 10px "Liberation Sans", sans-serif; }
.navbar { position: absolute; right: 3px; top: 186px; width: 33px; height: 213px; padding: 1px; display: flex; flex-direction: column; gap: 6px; background: #5b6064; border: 1px solid #3f454b; border-radius: 4px; fill: #33383d; }
.navbar button { flex-direction: column; gap: 4px; }
.navbar .dot { align-self: flex-end; }
.navbar .end { margin-top: auto; }
.navbar .wheel { height: 38px; margin: 1px 1px 0; background: #667b90; }

/* model and layout tabs */
.sheets { display: flex; height: 17px; background: #ece9d8; border-left: 3px solid #aca899; border-bottom: 2px solid #fff; color: #000; font: 11px "Liberation Sans", sans-serif; line-height: 16px; }
.sheets a { padding: 0 4px 0 2px; }
.sheets .active { background: #212830; color: #fff; padding: 0 7px 0 12px; clip-path: polygon(0 0, 100% 0, 88% 100%, 12% 100%); }
.sheet-nav { display: flex; }
.sheet-nav button { width: 15px; border: 1px solid #aca899; border-left-color: #fff; border-top-color: #fff; fill: #aca899; }

/* command line */
.command { display: flex; height: 68px; background: #9d9d9d; color: #000; font: 13px "Liberation Mono", monospace; }
.grip { width: 15px; }
.grip::before { content: ""; display: block; width: 11px; height: 4px; margin: 3px 0 0 2px; background: repeating-linear-gradient(90deg, #555 0 1px, transparent 1px 2px); }
.console { flex: 1; background: #fff; border-radius: 3px 0 0 0; }
.history { display: flex; height: 49px; border-bottom: 1px solid #aca899; }
.history pre { flex: 1; margin: 0; padding: 1px 0 0 2px; font: inherit; line-height: 16px; }
.vscroll { display: flex; flex-direction: column; justify-content: space-between; background: #f3f1ec; }
.prompt { display: flex; align-items: center; height: 19px; padding-left: 2px; }
.prompt input { flex: 1; }
.sb { width: 16px; height: 16px; background: #c3d3fd; border: 1px solid #9fb5e6; border-radius: 2px; }
.hscroll { display: flex; align-items: center; gap: 2px; height: 19px; padding: 0 19px 0 4px; background: #f3f1ec; }
.hscroll .last { margin-left: 13px; }

/* status bar */
.status { display: flex; height: 22px; background: linear-gradient(#858585, #9a9a9a); border-top: 1px solid #222; border-bottom: 1px solid #7f9db9; color: #111; font: 11px "Liberation Sans", sans-serif; }
.position { width: 178px; padding: 5px 12px 0; white-space: nowrap; }
.group { display: flex; border-left: 1px solid #555; }
.group button { width: 22px; padding-right: 1px; border-right: 1px solid #555; background: linear-gradient(#c4c4c4, #9c9c9c); }
.group .on { background: linear-gradient(#e4f4f9, #8ec9dc 60%, #b5e2ec); }
.right { margin-left: auto; }
.right .model { width: 45px; }
.right .ratio { width: 51px; gap: 2px; }
.right .off { color: #999; }
.right .pressed { width: 27px; background: #b9b7ae; border: 1px solid #444; }
.right .narrow { width: 12px; }
.space { width: 7px; border-right: 1px solid #555; background: #777; }

figcaption { padding: 44px 0 0 118px; color: #b8101f; text-align: center; font: bold 36px/52px Verdana, "DejaVu Sans", sans-serif; }
```
